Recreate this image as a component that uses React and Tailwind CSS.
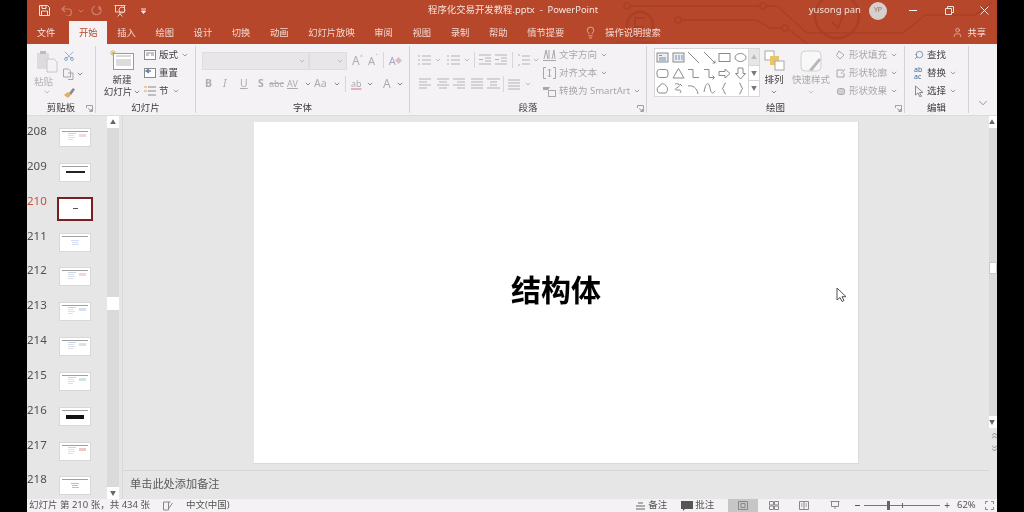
import React from 'react';
import { ChevronDown, Lightbulb, Search, Scissors, User } from 'lucide-react';

const TABS = ['插入', '绘图', '设计', '切换', '动画', '幻灯片放映', '审阅', '视图', '录制', '帮助', '情节提要'];

// kind: code = small text slide, thin / thick = title slide with a black bar
const THUMBS = [
  { n: 208, kind: 'code', accent: 'bg-[#f0d8de]' },
  { n: 209, kind: 'thin' },
  { n: 210, kind: 'title', active: true },
  { n: 211, kind: 'mini', accent: 'bg-[#d6d9f4]' },
  { n: 212, kind: 'code', accent: 'bg-[#f0d8de]' },
  { n: 213, kind: 'code', accent: 'bg-[#d5e0f0]' },
  { n: 214, kind: 'code', accent: 'bg-[#f0d8de]' },
  { n: 215, kind: 'code', accent: 'bg-[#cfe6d8]' },
  { n: 216, kind: 'thick' },
  { n: 217, kind: 'code', accent: 'bg-[#eec8c8]' },
  { n: 218, kind: 'mini', accent: 'bg-[#a9bfdf]' },
];

const Svg = ({ w = 12, h = 12, vb, className = '', children }) => (
  <svg width={w} height={h} viewBox={vb || `0 0 ${w} ${h}`} fill="none" stroke="currentColor" strokeWidth="1" className={`shrink-0 ${className}`}>
    {children}
  </svg>
);

const Caret = ({ className = 'text-[#8a8a8a]' }) => (
  <Svg w={6} h={4} className={className}><path d="M.8.8 3 3l2.2-2.2" /></Svg>
);

const Launcher = () => (
  <Svg w={7} h={7} className="text-[#a0a0a0]"><path d="M.5 3V.5h6v6H3.5M2 3.5 5.5 6M5.5 4v2h-2" /></Svg>
);

const Group = ({ width, label, launcher, children }) => (
  <div className={`${width} h-[67px] mt-[2px] shrink-0 flex flex-col border-r border-[#d4d2d4]`}>
    <div className="h-[56px] flex">{children}</div>
    <div className="h-[11px] flex items-center relative">
      <span className="flex-1 text-center text-[9.5px] leading-none text-[#3c3c3c]">{label}</span>
      {launcher && <span className="absolute right-[2px] top-[3px]"><Launcher /></span>}
    </div>
  </div>
);

const SmallBtn = ({ icon, text, disabled, caret = true, className = '' }) => (
  <div className={`h-[18px] flex items-center gap-[3px] text-[9.5px] ${disabled ? 'text-[#a8a8a8]' : 'text-[#444]'} ${className}`}>
    {icon}
    <span>{text}</span>
    {caret && <Caret className="ml-[1px] text-[#a0a0a0]" />}
  </div>
);

const Lines = ({ rows }) => rows.map((r, i) => <path key={i} d={`M${r[0]} ${r[2]}H${r[1]}`} />);

const AlignIcon = ({ rows }) => (
  <Svg w={13} h={12} className="text-[#b4b4b4]"><Lines rows={rows} /></Svg>
);

const BULLETS = [[4, 13, 2], [4, 13, 6], [4, 13, 10], [0, 2, 2], [0, 2, 6], [0, 2, 10]];
const INDENT = [[0, 12, 1], [6, 12, 4], [6, 12, 7], [0, 12, 10], [0, 4, 5.5]];

const SHAPES = [
  <><rect x="1" y="2" width="11" height="9" fill="#eee" /><path d="M3 4.500h3M3 7h7M3 9h7" stroke="#6a8fc0" /></>,
  <><rect x="1" y="2" width="11" height="9" fill="#eee" /><path d="M4 4v5M7 4v5M10 4v5" stroke="#6a8fc0" /></>,
  <path d="M1 1l11 11" />,
  <path d="M1 1l11 11M12 9.500V12H9.500" />,
  <rect x="1" y="2.500" width="11" height="8" />,
  <ellipse cx="6.500" cy="6.500" rx="5.500" ry="4" />,
  <rect x="1" y="2.500" width="11" height="8" rx="2.500" />,
  <path d="M6.500 1.500 12 11H1z" />,
  <path d="M1 2.500h5v8h6" />,
  <path d="M1 2.500h5v8h5M9.500 8.500l2 2-2 2" />,
  <path d="M1 4.500h6V2l5 4.500-5 4.500V8.500H1z" />,
  <path d="M4 1h5v5.500h2.500L6.500 12 1.500 6.500H4z" />,
  <path d="M3 11C0 9 1 4 4 4c0-3 5-3 6 0 2 1 2 5 0 7z" />,
  <path d="M3 2c4-1 6 1 3 3S2 8 5 8s5 0 3 3M8 2l2 2" />,
  <path d="M1 4c5-1 9 2 10 8" />,
  <path d="M1 10C3-1 6 0 7 6s3 6 5 3" />,
  <path d="M8 1C5 1 7 6 4 6.500c3 .5 1 5.500 4 5.500" />,
  <path d="M5 1c3 0 1 5 4 5.500-3 .5-1 5.500-4 5.500" />,
];

function Thumb({ kind, accent, active }) {
  if (active) {
    return (
      <div className="w-[36px] h-[24px] bg-white border-2 border-[#7a1f22] flex items-center justify-center">
        <div className="w-[5px] h-[1px] bg-[#555]" />
      </div>
    );
  }
  return (
    <div className="w-[32px] h-[19px] bg-white border border-[#d8d8d8] px-[2px] pt-[2px] flex flex-col">
      <div className="h-[1px] w-full bg-[#9aa0a4]" />
      {kind === 'thin' && <div className="mx-auto mt-[4px] h-[2px] w-[19px] bg-[#222]" />}
      {kind === 'thick' && <div className="mx-auto mt-[4px] h-[4px] w-[18px] bg-[#111]" />}
      {kind === 'code' && (
        <div className="flex mt-[1px] gap-[3px] pl-[6px]">
          <div className="flex flex-col gap-[1px]">
            <div className="h-[1px] w-[8px] bg-[#c8d4e4]" />
            <div className="h-[1px] w-[6px] bg-[#dde1e4]" />
            <div className="h-[1px] w-[7px] bg-[#dde1e4]" />
            <div className="h-[1px] w-[5px] bg-[#dde1e4]" />
          </div>
          <div className={`h-[3px] w-[7px] mt-[1px] ${accent}`} />
        </div>
      )}
      {kind === 'mini' && (
        <div className="flex flex-col items-center gap-[1px] mt-[3px]">
          <div className={`h-[1px] w-[8px] ${accent}`} />
          <div className={`h-[1px] w-[6px] ${accent}`} />
          <div className={`h-[1px] w-[7px] ${accent}`} />
        </div>
      )}
    </div>
  );
}

function TitleArea() {
  return (
    <div className="relative bg-[#b7472a] text-white shrink-0 overflow-hidden">
      {/* circuit board pattern of the theme */}
      <svg className="absolute left-[583px] top-0" width="387" height="44" fill="none" stroke="#a94026" strokeWidth="1.500">
        <path d="M20 6H150M156 6h11l30 27h96l22-18h50l17-13" />
        <path d="M71 20H147l13 8h12M178 29l20 15" />
        <path d="M5 42H45" />
        <circle cx="17" cy="6" r="3" />
        <circle cx="153" cy="6" r="3" />
        <circle cx="68" cy="20" r="3" />
        <circle cx="175" cy="28" r="3" />
        <circle cx="30" cy="25" r="13" strokeWidth="2.500" />
        <path d="M24 18h11M25 18v9h6a4 4 0 0 1 0 8h-7" strokeWidth="2" />
        <circle cx="227" cy="16" r="22" strokeWidth="2.500" />
        <path d="M222 22l6 6 8-20" strokeWidth="2" />
      </svg>
      <div className="relative h-[21px] flex items-center">
        <div className="w-[401px] pl-[12px] flex items-center">
          <Svg w={11} h={11} className="text-[#f4e4df]">
            <path d="M.5.500h8l2 2v8H.500zM3 .5v3h4v-3M2.500 10.500V6h6v4.500" />
          </Svg>
          <Svg w={12} h={11} className="ml-[11px] text-[#cf7f69]">
            <path d="M4 1 1 4l3 3M1 4h6a3.500 3.500 0 0 1 0 7H5" strokeWidth="1.200" />
          </Svg>
          <span className="ml-[5px]"><Caret className="text-[#cf7f69]" /></span>
          <Svg w={11} h={11} className="ml-[7px] text-[#cf7f69]">
            <path d="M8 1.500a4.500 4.500 0 1 1-4-.5M8 1v3h2.500" strokeWidth="1.200" />
          </Svg>
          <Svg w={13} h={13} className="ml-[12px] text-[#eed5cd]">
            <path d="M.5 1.500h11M1.500 1.500v6.500h9V1.500M6 8v2M3.500 12.500 6 10l2.500 2.500" />
            <circle cx="8" cy="6" r="3" />
          </Svg>
          <Svg w={5} h={6} className="ml-[14px] text-[#f4e4df]"><path d="M0 1h5M.5 3h4L2.500 5.500z" fill="currentColor" /></Svg>
        </div>
        <div className="flex-1 text-[9.4px] whitespace-pre text-[#f6e6e1]">程序化交易开发教程.pptx  -  PowerPoint</div>
        <div className="flex items-center text-[#f3dfd9]">
          <span className="text-[9.5px]">yusong pan</span>
          <span className="ml-[8px] w-[18px] h-[18px] rounded-full bg-[#d5cfcd] text-[#a06a5a] text-[7px] flex items-center justify-center">YP</span>
          <div className="w-[8px] h-[1px] bg-white ml-[22px]" />
          <Svg w={9} h={9} className="ml-[28px]"><path d="M.5 2.500h6v6h-6zM2.500 2.500v-2h6v6h-2" /></Svg>
          <Svg w={9} h={9} className="ml-[26px] mr-[8px]"><path d="m.5.500 8 8M8.500.500l-8 8" /></Svg>
        </div>
      </div>
      <div className="relative h-[23px] flex items-stretch text-[9.3px]">
        <div className="px-[9.800px] flex items-center mr-[4px] text-[#f6e6e1]">文件</div>
        <div className="px-[9.800px] flex items-center bg-[#f4f2f4] text-[#b7472a]">开始</div>
        {TABS.map((t) => (
          <div key={t} className="px-[9.800px] flex items-center text-[#f1d9d2]">{t}</div>
        ))}
        <Lightbulb size={13} strokeWidth={1.2} className="self-center ml-[10px] text-[#f1d9d2]" />
        <div className="ml-[8px] self-center text-[#f1d9d2]">操作说明搜索</div>
        <div className="ml-auto mr-[11px] self-center flex items-center gap-[4px] text-[#f6e6e1]">
          <User size={11} strokeWidth={1.2} />
          <span>共享</span>
        </div>
      </div>
    </div>
  );
}

function Ribbon() {
  return (
    <div className="h-[72px] shrink-0 bg-[#f4f2f4] border-b border-[#dcdcdc] flex">
      <Group width="w-[69px]" label="剪贴板" launcher>
        <div className="w-[36px] pl-[9px] flex flex-col items-start text-[#b4b4b4]">
          <Svg w={22} h={24} className="mt-[3px] text-[#c8c8c8]">
            <path d="M1 4h12v16H1z" fill="#dcdcdc" stroke="none" />
            <path d="M4 2h6v3H4z" fill="#bdbdbd" stroke="none" />
            <path d="M11 10h7l3 3v10H11z" fill="#f4f2f4" />
          </Svg>
          <span className="text-[9.5px] mt-[3px] ml-[-2px] leading-[12px]">粘贴</span>
          <span className="ml-[8px] mt-[2px]"><Caret className="text-[#bbb]" /></span>
        </div>
        <div className="flex flex-col pt-[1px]">
          <div className="h-[18px] flex items-center"><Scissors size={12} strokeWidth={1.200} className="text-[#5c7fa8] rotate-[-90deg]" /></div>
          <div className="h-[18px] flex items-center gap-[3px]">
            <Svg w={11} h={12} className="text-[#a8a8a8]"><path d="M.5 1h5l2 2v6H.500zM5 5h5v6.500H5" /></Svg>
            <Caret />
          </div>
          <div className="h-[18px] flex items-center">
            <Svg w={12} h={12}><path d="M6 7 10 2l2 1.500L8 9z" fill="#8a8a8a" stroke="none" /><path d="M1 9l4-3 3 3-3 3z" fill="#e0b060" stroke="none" /></Svg>
          </div>
        </div>
      </Group>

      <Group width="w-[100px]" label="幻灯片">
        <div className="w-[48px] pl-[2px] box-content mr-[-2px] flex flex-col items-center pt-[4px] text-[#444]">
          <Svg w={24} h={20} className="text-[#9a9a9a]">
            <path d="M3 0v6M0 3h6M1 1l4 4M5 1 1 5" stroke="#e0b860" />
            <rect x="3.500" y="3.500" width="20" height="16" fill="#fff" />
            <path d="M6 6h15" stroke="#b0b0b0" />
            <rect x="6" y="9" width="15" height="7" fill="#dcdcdc" stroke="none" />
          </Svg>
          <span className="text-[9.5px] leading-[12px] mt-[4px]">新建</span>
          <span className="text-[9.5px] leading-[12px] flex items-center gap-[2px]">幻灯片<Caret /></span>
        </div>
        <div className="flex flex-col">
          <SmallBtn text="版式" icon={<Svg w={12} h={10} className="text-[#8a8a8a]"><rect x=".5" y=".5" width="11" height="9" fill="#fff" /><path d="M2 3h8" /><path d="M2 5h3M7 5h3" /></Svg>} />
          <SmallBtn text="重置" caret={false} icon={<Svg w={12} h={10} className="text-[#5c7fa8]"><rect x=".5" y=".5" width="11" height="9" fill="#fff" stroke="#8a8a8a" /><path d="M5 1 2 3l3 2M2 3h5" strokeWidth="1.300" /></Svg>} />
          <SmallBtn text="节" icon={<Svg w={12} h={10} className="text-[#8a8a8a]"><path d="M0 1h3" stroke="#e0a050" /><path d="M4 1h8M4 5h8M4 9h8" /><path d="M0 5h3" stroke="#e0a050" /></Svg>} />
        </div>
      </Group>

      <Group width="w-[214px]" label="字体" launcher={false}>
        <div className="flex flex-col pl-[6px] w-full text-[#adadad]">
          <div className="h-[24px] pt-[6px] flex items-start">
            <div className="w-[107px] h-[18px] bg-[#e8e6e8] border border-[#dedcde] flex items-center justify-end pr-[3px]"><Caret className="text-[#bbb]" /></div>
            <div className="w-[38px] h-[18px] bg-[#e8e6e8] border border-[#dedcde] flex items-center justify-end pr-[3px]"><Caret className="text-[#bbb]" /></div>
            <span className="ml-[5px] text-[12px] leading-[18px]">A</span><span className="text-[6px]">^</span>
            <span className="ml-[5px] text-[11px] leading-[18px]">A</span><span className="text-[6px]">ˇ</span>
            <div className="ml-[5px] w-[1px] h-[16px] bg-[#d8d6d8]" />
            <span className="ml-[5px] text-[11px] leading-[18px] text-[#a8a8c0]">A</span><span className="mt-[6px] w-[5px] h-[5px] rotate-45 bg-[#e0b8c8]" />
          </div>
          <div className="h-[26px] pt-[2px] flex items-center text-[10.500px] font-bold pl-[3px]">
            <span className="w-[18px]">B</span>
            <span className="w-[17px] italic font-normal">I</span>
            <span className="w-[18px] underline font-normal">U</span>
            <span className="w-[11px]">S</span>
            <span className="w-[18px] line-through font-normal text-[9px]">abc</span>
            <span className="w-[18px] font-normal text-[9px] underline">AV</span>
            <span className="w-[9px]"><Caret /></span>
            <span className="w-[20px] font-normal">Aa</span>
            <Caret />
            <div className="ml-[5px] w-[1px] h-[16px] bg-[#d8d6d8]" />
            <span className="ml-[5px] w-[16px] font-normal text-[9px] underline decoration-[#e8b0c0] decoration-2">ab</span>
            <span className="w-[12px]"><Caret /></span>
            <span className="ml-[4px] w-[14px] text-[12px] font-normal">A</span>
            <Caret />
          </div>
        </div>
      </Group>

      <Group width="w-[237px]" label="段落" launcher>
        <div className="w-[133px] flex flex-col">
          <div className="h-[26px] pt-[2px] pl-[8px] flex items-center text-[#b4b4b4]">
            <AlignIcon rows={BULLETS} />
            <span className="ml-[4px]"><Caret className="text-[#bbb]" /></span>
            <span className="ml-[6px]"><AlignIcon rows={BULLETS} /></span>
            <span className="ml-[4px]"><Caret className="text-[#bbb]" /></span>
            <div className="ml-[4px] w-[1px] h-[16px] bg-[#d8d6d8]" />
            <span className="ml-[4px]"><AlignIcon rows={INDENT} /></span>
            <span className="ml-[3px]"><AlignIcon rows={INDENT} /></span>
            <div className="ml-[4px] w-[1px] h-[16px] bg-[#d8d6d8]" />
            <span className="ml-[4px]"><AlignIcon rows={[[5, 13, 2], [5, 13, 6], [5, 13, 10], [1, 3, 1], [1, 3, 11]]} /></span>
            <span className="ml-[3px]"><Caret className="text-[#bbb]" /></span>
          </div>
          <div className="h-[24px] pl-[9px] flex items-center">
            <AlignIcon rows={[[0, 12, 1], [0, 8, 4], [0, 12, 7], [0, 8, 10]]} />
            <span className="ml-[5px]"><AlignIcon rows={[[0, 12, 1], [2, 10, 4], [0, 12, 7], [2, 10, 10]]} /></span>
            <span className="ml-[3px]"><AlignIcon rows={[[0, 12, 1], [4, 12, 4], [0, 12, 7], [4, 12, 10]]} /></span>
            <span className="ml-[5px]"><AlignIcon rows={[[0, 12, 1], [0, 12, 4], [0, 12, 7], [0, 12, 10]]} /></span>
            <span className="ml-[3px]"><AlignIcon rows={[[0, 13, 1], [3, 10, 4], [3, 10, 7], [0, 13, 10]]} /></span>
            <div className="ml-[3px] w-[1px] h-[16px] bg-[#d8d6d8]" />
            <span className="ml-[4px]"><AlignIcon rows={[[0, 12, 2], [0, 12, 5], [0, 12, 8], [0, 12, 11]]} /></span>
            <span className="ml-[4px]"><Caret className="text-[#bbb]" /></span>
          </div>
        </div>
        <div className="flex flex-col">
          <SmallBtn disabled text="文字方向" icon={<Svg w={13} h={12} className="text-[#a8a8a8]"><path d="M1 10 3 1l2 9M6 10V1M9 10l2-9 1 9M0 11.500h13" /></Svg>} />
          <SmallBtn disabled text="对齐文本" icon={<Svg w={13} h={12} className="text-[#a8a8a8]"><path d="M3 .5H.5v11H3M10 .5h2.500v11H10M6.500 2v8M5 3.500 6.500 2 8 3.500M5 8.500 6.500 10 8 8.500" /></Svg>} />
          <SmallBtn disabled text="转换为 SmartArt" icon={<Svg w={13} h={12} className="text-[#a8a8a8]"><path d="M0 2h7l-2 3H0z" fill="currentColor" stroke="none" /><rect x="5.500" y="5.500" width="7" height="6" /></Svg>} />
        </div>
      </Group>

      <Group width="w-[258px]" label="绘图" launcher>
        <div className="ml-[7px] mt-[2px] h-[49px] flex bg-white border border-[#d8d6d8]">
          <div className="grid grid-cols-6 w-[93px] content-start pt-[1px] text-[#8a8a8a]">
            {SHAPES.map((s, i) => (
              <div key={i} className="h-[15.500px] flex items-center justify-center">
                <Svg w={13} h={13}>{s}</Svg>
              </div>
            ))}
          </div>
          <div className="w-[11px] flex flex-col border-l border-[#d8d6d8] bg-[#f4f2f4]">
            <div className="h-[16px] bg-[#e6e6e6] flex items-center justify-center text-[6px] text-[#bbb]">▲</div>
            <div className="h-[16px] border-y border-[#d8d6d8] bg-white flex items-center justify-center text-[6px] text-[#777]">▼</div>
            <div className="flex-1 bg-white flex items-center justify-center text-[6px] text-[#777]">▼</div>
          </div>
        </div>
        <div className="ml-[4px] w-[20px] flex flex-col items-center pt-[4px] text-[#444]">
          <Svg w={21} h={21} vb="0 0 21 21">
            <rect x="1" y="1" width="9" height="9" fill="#fff" stroke="#a8a8a8" />
            <rect x="6" y="6" width="9" height="9" fill="#e9c46a" stroke="none" />
            <rect x="11" y="11" width="9" height="9" fill="#fff" stroke="#a8a8a8" />
          </Svg>
          <span className="text-[9.5px] leading-[12px] mt-[3px] whitespace-nowrap">排列</span>
          <span className="mt-[4px]"><Caret /></span>
        </div>
        <div className="ml-[8px] w-[38px] flex flex-col items-center pt-[4px] text-[#ababab]">
          <Svg w={22} h={22} vb="0 0 22 22" className="text-[#d0d0d0]">
            <rect x="1" y="1" width="20" height="20" rx="4" fill="#f8f8f8" />
            <path d="M9 20 19 8l2 2-9 11z" fill="#b8b8b8" stroke="none" />
          </Svg>
          <span className="text-[9.5px] leading-[12px] mt-[2px] whitespace-nowrap">快速样式</span>
          <span className="mt-[4px]"><Caret className="text-[#c4c4c4]" /></span>
        </div>
        <div className="ml-[6px] flex flex-col">
          <SmallBtn disabled text="形状填充" icon={<Svg w={10} h={10} className="text-[#a8a8a8]"><path d="M3 1 8 5 4 9 .5 5.500z" /></Svg>} />
          <SmallBtn disabled text="形状轮廓" icon={<Svg w={10} h={10} className="text-[#a8a8a8]"><path d="M1 2h6M1 2v7h7V5M5 6l4-5" /></Svg>} />
          <SmallBtn disabled text="形状效果" icon={<Svg w={10} h={10} className="text-[#a8a8a8]"><rect x="1.500" y="2.500" width="7" height="6" rx="2" fill="#d0d0d0" /></Svg>} />
        </div>
      </Group>

      <Group width="w-[64px]" label="编辑">
        <div className="pl-[9px] flex flex-col">
          <SmallBtn text="查找" caret={false} icon={<Search size={10} strokeWidth={1.500} className="text-[#38689c] -scale-x-100" />} />
          <SmallBtn text="替换" icon={<span className="w-[10px] text-[7px] leading-[7px] text-[#38689c]">ab<br />ac</span>} />
          <SmallBtn text="选择" icon={<Svg w={10} h={12} className="text-[#8a8a8a]"><path d="M1.500 1v9l2.500-2 2 4 1.500-.7-2-3.800H9z" /></Svg>} />
        </div>
      </Group>

      <div className="flex-1 flex items-end justify-center pb-[5px]">
        <ChevronDown size={14} strokeWidth={1} className="text-[#555]" />
      </div>
    </div>
  );
}

function ThumbPanel() {
  return (
    <div className="w-[95px] shrink-0 flex border-r-[3px] border-[#e6e6e6] relative">
      <div className="w-[80px] pt-[8px] flex flex-col overflow-hidden">
        {THUMBS.map((t) => (
          <div key={t.n} className="h-[34.850px] shrink-0 flex items-start">
            <span className={`w-[30px] text-[11.500px] leading-[14px] ${t.active ? 'text-[#c8523a]' : 'text-[#505050]'}`}>{t.n}</span>
            <div className={t.active ? 'mt-[3px]' : 'ml-[2px] mt-[4px]'}><Thumb kind={t.kind} accent={t.accent} active={t.active} /></div>
          </div>
        ))}
      </div>
      <div className="w-[12px] bg-[#dbdadb] flex flex-col justify-between">
        <div className="h-[12px] bg-white flex items-center justify-center text-[6px] text-[#666]">▲</div>
        <div className="h-[12px] bg-white flex items-center justify-center text-[6px] text-[#666]">▼</div>
      </div>
      {/* scroll thumb */}
      <div className="absolute left-[80px] top-[181px] w-[12px] h-[13px] bg-white" />
    </div>
  );
}

function StatusBar() {
  return (
    <div className="h-[13px] shrink-0 bg-[#f4f2f4] flex items-center text-[9.5px] text-[#555] overflow-hidden">
      <span className="ml-[2px] w-[134px] whitespace-nowrap">幻灯片 第 210 张，共 434 张</span>
      <Svg w={11} h={10} className="text-[#888]"><path d="M.5 1h5v8h-5zM5.500 1h2M9.500 2 6 7" /></Svg>
      <span className="ml-[12px]">中文(中国)</span>
      <div className="ml-auto flex items-center h-full">
        <Svg w={9} h={8} className="text-[#666]"><path d="M2 1h5M0 4h9M0 7h9" /></Svg>
        <span className="ml-[3px]">备注</span>
        <Svg w={12} h={10} className="ml-[14px] text-[#555]"><path d="M0 0h12v8H4L2 10V8H0z" fill="currentColor" stroke="none" /></Svg>
        <span className="ml-[2px]">批注</span>
        <div className="ml-[14px] w-[30px] h-full bg-[#c6c6c6] flex items-center justify-center">
          <Svg w={10} h={9} className="text-[#888]"><path d="M.5.500h9v8h-9zM3 2.500h4v4H3z" /></Svg>
        </div>
        <div className="w-[31px] flex justify-center"><Svg w={10} h={9} className="text-[#888]"><path d="M.5.500h4v3.500h-4zM5.500.500h4v3.500h-4zM.5 5h4v3.500h-4zM5.500 5h4v3.500h-4z" /></Svg></div>
        <div className="w-[30px] flex justify-center"><Svg w={10} h={9} className="text-[#888]"><path d="M.5.500h9v8h-9zM5 .5v8M2 3h1.500M2 5h1.500M6.500 3H8M6.500 5H8" /></Svg></div>
        <div className="w-[31px] flex justify-center"><Svg w={10} h={9} className="text-[#888]"><path d="M.5.500h9M1.500.500v5h7v-5M5 5.500V8" /></Svg></div>
        <div className="ml-[5px] w-[5px] h-[1px] bg-[#555]" />
        <div className="ml-[4px] w-[76px] h-[1px] bg-[#777] relative">
          <div className="absolute left-[23px] top-[-4px] w-[3px] h-[9px] bg-[#666]" />
          <div className="absolute left-[38px] top-[-2px] w-[1px] h-[5px] bg-[#666]" />
        </div>
        <span className="ml-[4px] text-[10px]">+</span>
        <span className="ml-[7px] w-[28px]">62%</span>
        <Svg w={9} h={9} className="mr-[3px] text-[#888]"><path d="M.5 3V.5H3M6 .5h2.500V3M8.500 6v2.500H6M3 8.500H.5V6" /></Svg>
      </div>
    </div>
  );
}

export default function App() {
  return (
    <div className="w-[1024px] h-[512px] bg-black px-[27px] overflow-hidden blur-[0.35px] font-['Noto_Sans','Noto_Sans_CJK_SC',sans-serif]">
      <div className="h-full flex flex-col bg-[#e6e6e6]">
        <TitleArea />
        <Ribbon />
        <div className="flex-1 min-h-0 flex">
          <ThumbPanel />
          <div className="flex-1 flex flex-col min-w-0 border-l border-[#d9d9d9]">
            <div className="flex-1 min-h-0 pl-[131px] pt-[6px]">
              <div className="relative w-[605px] h-[342px] bg-white border-r border-b border-[#dadada] flex items-center justify-center">
                <span className="text-[30px] font-bold text-black mt-[-6px]">结构体</span>
                {/* mouse pointer */}
                <svg className="absolute left-[582px] top-[165px]" width="11" height="16" fill="#fff" stroke="#555" strokeWidth="1">
                  <path d="M1 1v12l3-2.500 2 4 2-1-2-3.800h4z" />
                </svg>
              </div>
            </div>
            <div className="h-[29px] shrink-0 border-t border-[#d5d5d5] flex items-center pl-[7px] pb-[2px] text-[11.200px] text-[#5a5a5a]">单击此处添加备注</div>
          </div>
          <div className="w-[8px] shrink-0 bg-[#dbdadb] flex flex-col relative">
            <div className="h-[12px] bg-white text-[6px] leading-[12px] text-[#666]">▲</div>
            <div className="absolute left-0 top-[146px] w-[8px] h-[12px] bg-white border border-[#c8c8c8]" />
            <div className="mt-[288px] h-[12px] bg-white text-[6px] leading-[12px] text-[#666]">▼</div>
            <div className="flex-1 bg-[#e6e6e6] pt-[4px] pl-[3px] flex flex-col gap-[6px] text-[#888]">
              {/* previous / next slide */}
              <Svg w={5} h={7}><path d="M0 3.500 2.500 1 5 3.500M0 6.500 2.500 4 5 6.500" /></Svg>
              <Svg w={5} h={7}><path d="M0 .5 2.500 3 5 .5M0 3.500 2.500 6 5 3.500" /></Svg>
            </div>
          </div>
        </div>
        <StatusBar />
      </div>
    </div>
  );
}
